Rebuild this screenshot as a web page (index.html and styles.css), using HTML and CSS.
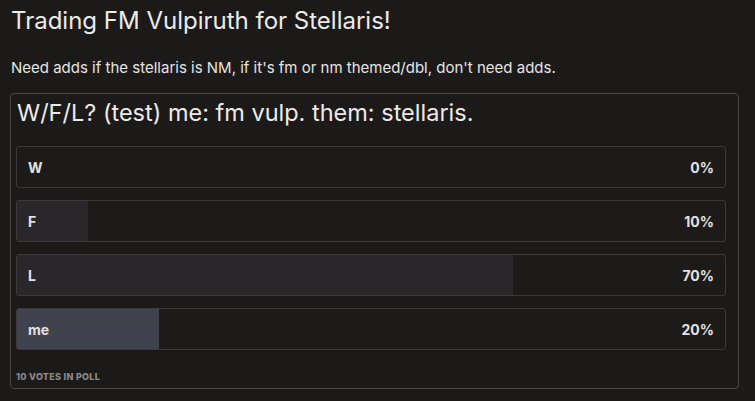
FILE: index.html
```html
<!DOCTYPE html>
<html>
<head>
<meta charset="utf-8">
<link rel="stylesheet" href="styles.css">
</head>
<body>
<h1 class="title">Trading FM Vulpiruth for Stellaris!</h1>
<p class="desc">Need adds if the stellaris is NM, if it's fm or nm themed/dbl, don't need adds.</p>
<div class="poll">
  <div class="poll-q">W/F/L? (test) me: fm vulp. them: stellaris.</div>
  <div class="opts">
    <div class="opt"><div class="fill" style="width:0%"></div><span class="lbl">W</span><span class="pct">0%</span></div>
    <div class="opt"><div class="fill" style="width:10%"></div><span class="lbl">F</span><span class="pct">10%</span></div>
    <div class="opt"><div class="fill" style="width:70%"></div><span class="lbl">L</span><span class="pct">70%</span></div>
    <div class="opt mine"><div class="fill" style="width:20%"></div><span class="lbl">me</span><span class="pct">20%</span></div>
  </div>
  <div class="votes">10 votes in poll</div>
</div>
</body>
</html>
```
FILE: styles.css
```css
html, body { background: #1c1a19; }
body {
  margin: 0;
  padding: 0 11px;
  color: #e8e6e5;
  font-family: "Inter", "Noto Sans", sans-serif;
}
.title {
  margin: 6px 0 0;
  font-size: 24px;
  line-height: 30px;
  font-weight: 400;
  color: #ecebea;
}
.desc {
  margin: 22px 0 0;
  font-size: 15px;
  line-height: 20px;
  color: #e6e4e3;
}
.poll {
  margin: 15px 0 0 -1px;
  width: 710px;
  border: 1px solid #4b4848;
  border-radius: 4px;
  padding: 5px 12px 5px 5px;
}
.poll-q {
  font-size: 23.5px;
  line-height: 28px;
  padding-left: 1px;
  color: #eceae9;
}
.opts {
  margin-top: 19px;
  display: flex;
  flex-direction: column;
  gap: 12px;
}
.opt {
  position: relative;
  height: 40px;
  border: 1px solid #3c3a3a;
  border-radius: 3px;
  background: #1d1b1a;
  overflow: hidden;
  display: flex;
  align-items: center;
  justify-content: space-between;
  padding: 0 11px 0 11px;
  font-size: 14px;
  font-weight: 700;
  color: #e4e2e1;
}
.fill {
  position: absolute;
  left: 0; top: 0; bottom: 0;
  background: #29272a;
}
.mine .fill { background: #40424d; }
.lbl, .pct { position: relative; }
.votes {
  margin-top: 21px;
  font-size: 9px;
  line-height: 12px;
  font-weight: 800;
  text-transform: uppercase;
  letter-spacing: 0.3px;
  color: #8d8a89;
}
```
